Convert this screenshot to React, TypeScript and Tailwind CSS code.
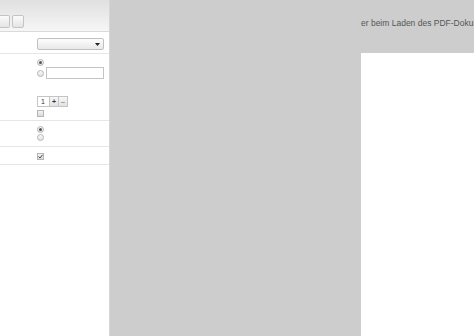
import React from "react";

const Radio: React.FC<{ checked?: boolean }> = ({ checked }) => (
  <div className="w-[7px] h-[7px] rounded-full border border-[#b5b5b5] bg-gradient-to-b from-[#fafafa] to-[#e2e2e2] flex items-center justify-center">
    {checked && <div className="w-[3px] h-[3px] rounded-full bg-[#555]" />}
  </div>
);

const Check: React.FC<{ checked?: boolean }> = ({ checked }) => (
  <div className="w-[7px] h-[7px] border border-[#b5b5b5] bg-gradient-to-b from-[#f4f4f4] to-[#dadada] flex items-center justify-center">
    {checked && (
      <svg width="5" height="5" viewBox="0 0 5 5">
        <path d="M0.5 2.5 L2 4 L4.5 0.8" stroke="#444" strokeWidth="1" fill="none" />
      </svg>
    )}
  </div>
);

const Sep = () => <div className="h-px bg-[#e6e6e6]" />;

export default function App() {
  return (
    <div className="w-[474px] h-[336px] flex overflow-hidden bg-[#cdcdcd] font-['Liberation_Sans',Arial,sans-serif]">
      <div className="w-[110px] shrink-0 h-full bg-white border-r border-[#d6d6d6] flex flex-col">
        <div className="h-[32px] bg-gradient-to-b from-[#e0e0e0] to-[#f6f6f6] border-b border-[#dadada] flex items-start pt-[15px] gap-[2px]">
          <div className="w-[10px] h-[13px] border border-l-0 border-[#c4c4c4] rounded-r-[2px] bg-gradient-to-b from-[#fbfbfb] to-[#e4e4e4]" />
          <div className="w-[12px] h-[13px] border border-[#c4c4c4] rounded-[2px] bg-gradient-to-b from-[#fbfbfb] to-[#e4e4e4]" />
        </div>
        <div className="h-[21px] pl-[37px] pt-[6px]">
          <div className="w-[67px] h-[12px] border border-[#c0c0c0] rounded-[2px] bg-gradient-to-b from-[#fdfdfd] to-[#e8e8e8] flex items-center justify-end pr-[3px]">
            <svg width="5" height="3" viewBox="0 0 5 3">
              <path d="M0 0 H5 L2.5 3 Z" fill="#222" />
            </svg>
          </div>
        </div>
        <Sep />
        <div className="h-[66px] pl-[37px] pt-[5px] flex flex-col">
          <Radio checked />
          <div className="flex items-center gap-[2px] mt-[1px]">
            <Radio />
            <div className="w-[58px] h-[12px] border border-[#c4c4c4] bg-white" />
          </div>
          <div className="flex mt-[17px] h-[11px]">
            <div className="w-[13px] h-full border border-[#c4c4c4] bg-white text-[7px] leading-[9px] pl-[3px] text-[#333]">1</div>
            <div className="w-[9px] h-full border border-l-0 border-[#c4c4c4] bg-gradient-to-b from-[#f8f8f8] to-[#e2e2e2] text-[7px] leading-[9px] text-center text-[#333] font-bold">+</div>
            <div className="w-[9px] h-full border border-l-0 border-[#c4c4c4] bg-gradient-to-b from-[#f8f8f8] to-[#e2e2e2] text-[7px] leading-[9px] text-center text-[#666]">–</div>
          </div>
          <div className="mt-[3px]">
            <Check />
          </div>
        </div>
        <Sep />
        <div className="h-[25px] pl-[37px] pt-[5px] flex flex-col gap-[1px]">
          <Radio checked />
          <Radio />
        </div>
        <Sep />
        <div className="h-[17px] pl-[37px] pt-[6px]">
          <Check checked />
        </div>
        <Sep />
      </div>
      <div className="flex-1 h-full pl-[251px] flex flex-col">
        <div className="h-[53px] overflow-hidden whitespace-nowrap text-[8.5px] text-[#555] pt-[17px]">
          er beim Laden des PDF-Dokuments.
        </div>
        <div className="flex-1 bg-white" />
      </div>
    </div>
  );
}
